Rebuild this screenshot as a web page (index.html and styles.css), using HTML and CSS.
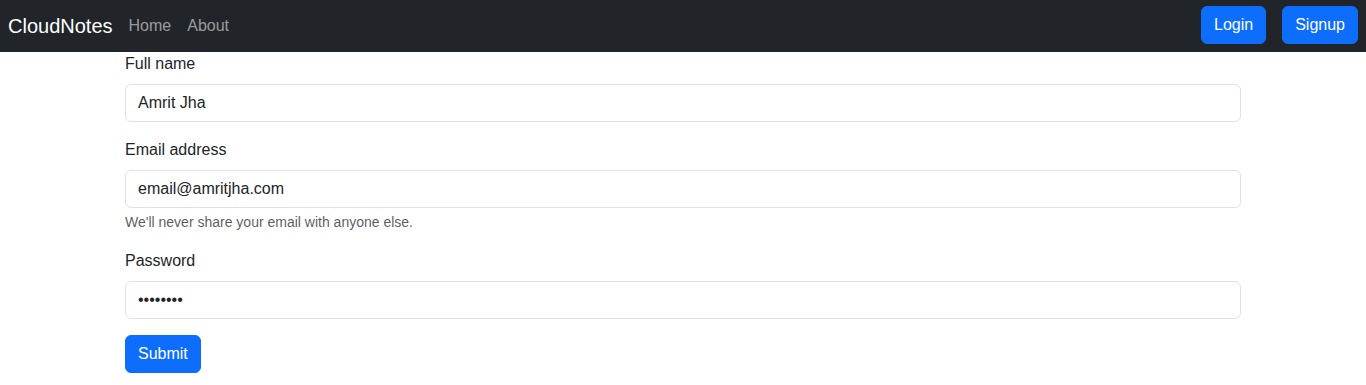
FILE: index.html
```html
<!DOCTYPE html>
<html lang="en">
<head>
<meta charset="utf-8">
<title>CloudNotes</title>
<link rel="stylesheet" href="styles.css">
</head>
<body>
<nav class="navbar">
  <div class="nav-left">
    <a class="brand" href="#">CloudNotes</a>
    <a class="nav-link" href="#">Home</a>
    <a class="nav-link" href="#">About</a>
  </div>
  <div class="nav-right">
    <a class="btn" href="#">Login</a>
    <a class="btn" href="#">Signup</a>
  </div>
</nav>
<main class="container">
  <form class="form">
    <div class="field">
      <label class="label" for="name">Full name</label>
      <input class="input" id="name" type="text" value="Amrit Jha">
    </div>
    <div class="field">
      <label class="label" for="email">Email address</label>
      <input class="input" id="email" type="email" value="email@amritjha.com">
      <div class="form-text">We'll never share your email with anyone else.</div>
    </div>
    <div class="field">
      <label class="label" for="password">Password</label>
      <input class="input" id="password" type="password" value="password">
    </div>
    <button class="btn submit" type="button">Submit</button>
  </form>
</main>
</body>
</html>
```
FILE: styles.css
```css
* { box-sizing: border-box; }
html, body {
  margin: 0;
  padding: 0;
  background: #fff;
  color: #212529;
  font-family: "Liberation Sans", Arial, sans-serif;
  font-size: 16px;
  line-height: 24px;
}
a { text-decoration: none; }
.navbar {
  height: 52px;
  background: #212529;
  display: flex;
  align-items: center;
  justify-content: space-between;
  padding: 0 8px;
}
.nav-left {
  display: flex;
  align-items: center;
}
.brand {
  color: #fff;
  font-size: 20px;
  line-height: 30px;
  margin-right: 8px;
}
.nav-link {
  color: rgba(255, 255, 255, 0.55);
  padding: 8px;
  font-size: 16px;
  line-height: 24px;
}
.nav-right {
  display: flex;
  gap: 16px;
  margin-top: -3px;
}
.btn {
  display: inline-block;
  background: #0d6efd;
  color: #fff;
  border: 1px solid #0d6efd;
  border-radius: 6px;
  padding: 6px 12px;
  font-family: inherit;
  font-size: 16px;
  line-height: 24px;
  cursor: pointer;
}
.container {
  width: 1116px;
  margin: 0 auto;
}
.form {
  display: flex;
  flex-direction: column;
  align-items: flex-start;
}
.field {
  width: 100%;
  margin-bottom: 16px;
}
.label {
  display: block;
  margin-bottom: 8px;
}
.input {
  display: block;
  width: 100%;
  height: 38px;
  padding: 6px 12px;
  font-family: inherit;
  font-size: 16px;
  line-height: 24px;
  color: #212529;
  background: #fff;
  border: 1px solid #dee2e6;
  border-radius: 6px;
  outline: none;
}
.form-text {
  margin-top: 4px;
  font-size: 14px;
  line-height: 21px;
  color: rgba(33, 37, 41, 0.75);
}
```
